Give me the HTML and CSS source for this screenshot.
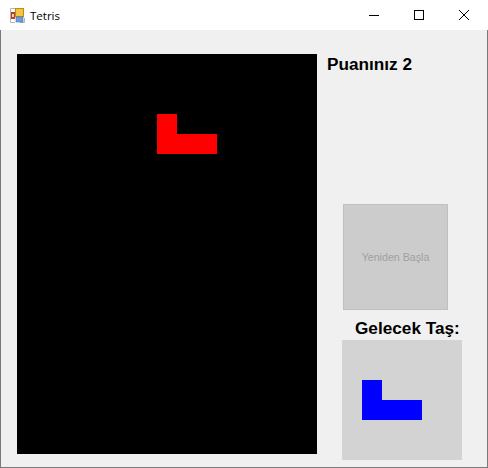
FILE: index.html
```html
<!DOCTYPE html>
<html lang="tr">
<head>
<meta charset="utf-8">
<title>Tetris</title>
<link rel="stylesheet" href="styles.css">
</head>
<body>
<div class="window">
  <header class="titlebar">
    <svg class="app-icon" width="15" height="15" viewBox="0 0 15 15">
      <path d="M0.5 4V0.5H5M0.5 11V14.5H5M10 14.5H14.5V10" fill="none" stroke="#b4b4b4"/>
      <rect x="0" y="4" width="5" height="7" fill="#b4b4b4"/>
      <rect x="1" y="4" width="4" height="7" fill="#c0392b"/>
      <rect x="2" y="6" width="2" height="3" fill="#ecd9a0"/>
      <rect x="5.5" y="0.5" width="8" height="8" fill="#f3c63f" stroke="#c08a18"/>
      <rect x="6" y="9" width="7" height="5" fill="#6d9fdc" stroke="#3f73b8" stroke-width="0.6"/>
    </svg>
    <span class="title">Tetris</span>
    <div class="controls">
      <div class="control">
        <svg width="12" height="12" viewBox="0 0 12 12"><path d="M1 6.5H11" stroke="#000" fill="none"/></svg>
      </div>
      <div class="control">
        <svg width="12" height="12" viewBox="0 0 12 12"><rect x="1.5" y="1.5" width="9" height="9" stroke="#000" fill="none"/></svg>
      </div>
      <div class="control">
        <svg width="12" height="12" viewBox="0 0 12 12"><path d="M1 1L11 11M11 1L1 11" stroke="#000" stroke-width="1" fill="none"/></svg>
      </div>
    </div>
  </header>
  <main class="client">
    <div class="board">
      <svg class="piece board-piece" width="60" height="40" viewBox="0 0 60 40"><path d="M0 0H20V20H60V40H0Z" fill="#f00"/></svg>
    </div>
    <aside class="side">
      <div class="score">Puanınız 2</div>
      <button class="restart" disabled>Yeniden Başla</button>
      <div class="next-label">Gelecek Taş:</div>
      <div class="next">
        <svg class="piece" width="60" height="40" viewBox="0 0 60 40"><path d="M0 0H20V20H60V40H0Z" fill="#00f"/></svg>
      </div>
    </aside>
  </main>
</div>
</body>
</html>
```

FILE: styles.css
```css
* { box-sizing: border-box; }
html, body { margin: 0; padding: 0; }
body { width: 488px; height: 468px; overflow: hidden; }

.window {
  width: 488px;
  height: 468px;
  display: flex;
  flex-direction: column;
  background: #f0f0f0;
}

.titlebar {
  height: 30px;
  flex: none;
  display: flex;
  align-items: center;
  background: #fff;
  padding: 0 2px 0 10px;
}
.app-icon { flex: none; }
.title {
  margin-left: 5px;
  font: 11.5px "Open Sans", "Noto Sans", sans-serif;
  color: #000;
}
.controls { margin-left: auto; display: flex; }
.control {
  width: 45px;
  height: 30px;
  display: flex;
  align-items: center;
  justify-content: center;
}

.client {
  flex: 1;
  display: flex;
  align-items: flex-start;
  padding: 24px 0 0 16px;
  border: 1px solid #7a7a7a;
  border-top: none;
}
.board {
  position: relative;
  width: 300px;
  height: 400px;
  flex: none;
  background: #000;
}
.piece { display: block; }
.board-piece { position: absolute; left: 140px; top: 60px; }

.side {
  width: 170px;
  flex: none;
  display: flex;
  flex-direction: column;
  padding-left: 10px;
}
.score, .next-label {
  font: bold 17.2px/20px "Liberation Sans", Arial, sans-serif;
  color: #000;
}
.restart {
  width: 105px;
  height: 106px;
  margin: 130px 0 0 16px;
  padding: 0;
  background: #ccc;
  border: 1px solid #bfbfbf;
  color: #a0a0a0;
  font: 10.67px "Liberation Sans", Arial, sans-serif;
}
.next-label { margin: 8px 0 0 28px; }
.next {
  width: 120px;
  height: 120px;
  margin: 2px 0 0 15px;
  padding: 40px 0 0 20px;
  background: #d3d3d3;
}
```
